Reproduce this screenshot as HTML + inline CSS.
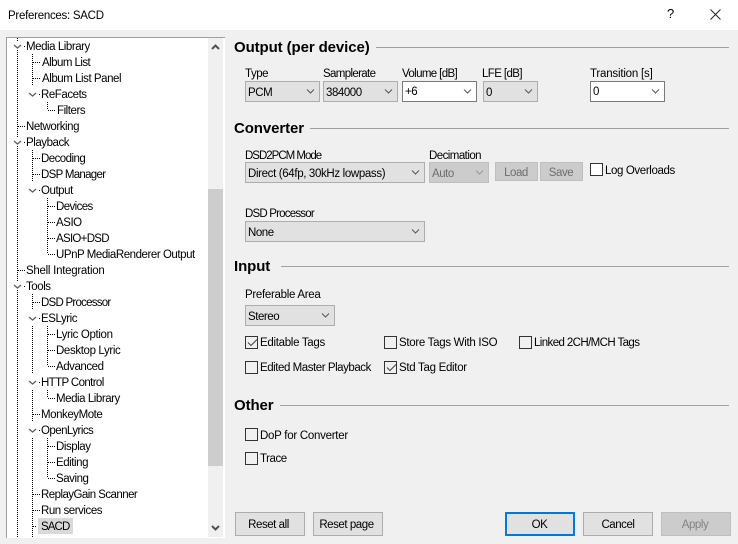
<!DOCTYPE html>
<html><head><meta charset="utf-8"><title>Preferences: SACD</title>
<style>
html,body{margin:0;padding:0}
body{width:738px;height:544px;position:relative;overflow:hidden;background:#f0f0f0;font-family:"Liberation Sans",sans-serif;font-size:11.5px;letter-spacing:-.45px;color:#000}
div,span{position:absolute;white-space:nowrap;box-sizing:border-box}
.t{line-height:16px;height:16px;margin-top:1px}
.h{font-weight:bold;font-size:15px;letter-spacing:-.1px;line-height:20px;height:20px;left:234px;margin-top:1px}
.l{height:1px;background:#a0a0a0;right:9px}
.c{height:21px;border:1px solid #adadad;background:#e1e1e1;line-height:23px;padding-left:2px}
.w{background:#fff;border-color:#7a7a7a;line-height:21px}
.d{background:#ccc;border-color:#bfbfbf;color:#6d6d6d}
.b{height:24px;width:70px;top:512px;border:1px solid #adadad;background:#e1e1e1;text-align:center;line-height:24px}
.x{width:13px;height:13px;border:1px solid #333;background:#fff}
.e{background:#f0f0f0}
</style></head><body>
<div style="left:0;top:0;width:738px;height:30px;background:#fff"></div>
<div class="t" style="left:8px;top:7px;letter-spacing:-.27px">Preferences: SACD</div>
<div style="left:6px;top:37px;width:219px;height:501px;background:#fff;border-left:1px solid #a0a0a0;border-top:1px solid #a0a0a0"></div>
<div style="left:208px;top:38px;width:15px;height:499px;background:#f0f0f0"></div>
<div style="left:208px;top:189px;width:15px;height:277px;background:#cdcdcd"></div>
<div style="left:38px;top:518px;width:35px;height:16px;background:#d9d9d9"></div>

<svg width="738" height="544" style="position:absolute;left:0;top:0">
<g fill="none" stroke="#000" stroke-dasharray="1 1" shape-rendering="crispEdges">
<path d="M17.5 38V42M17.5 50V138M17.5 146V282M17.5 290V537"/>
<path d="M32.5 54V86M32.5 150V182M32.5 294V310M32.5 326V374M32.5 390V422M32.5 438V537"/>
<path d="M47.5 102V110M47.5 198V254M47.5 326V366M47.5 390V398M47.5 438V478"/>
<path d="M18 126.500H25M33 62.500H41M33 78.500H41M48 110.500H56M33 158.500H40M33 174.500H40M48 206.500H55M48 222.500H55M48 238.500H55M48 254.500H55M18 270.500H25M33 302.500H40M48 334.500H55M48 350.500H55M48 366.500H55M48 398.500H55M33 414.500H40M48 446.500H55M48 462.500H55M48 478.500H55M33 494.500H40M33 510.500H40M33 526.500H37"/>
<path d="M24 46.500H25M39 94.500H40M24 142.500H25M39 190.500H40M24 286.500H25M39 318.500H40M39 382.500H40M39 430.500H40"/>
</g>
<g fill="none" stroke="#606060" stroke-width="1.300">
<path d="M14 45l3.500 3 3.500-3M29 93l3.500 3 3.500-3M14 141l3.500 3 3.500-3M29 189l3.500 3 3.500-3M14 285l3.500 3 3.500-3M29 317l3.500 3 3.500-3M29 381l3.500 3 3.500-3M29 429l3.500 3 3.500-3"/>
</g>
<g fill="none" stroke="#505050" stroke-width="2">
<path d="M212 49l3.500-3.500 3.500 3.500M212 526l3.500 3.500 3.500-3.500"/>
</g>
</svg>

<span class="t" style="left:26px;top:38px">Media Library</span>
<span class="t" style="left:42px;top:54px;letter-spacing:-.55px">Album List</span>
<span class="t" style="left:42px;top:70px">Album List Panel</span>
<span class="t" style="left:41px;top:86px">ReFacets</span>
<span class="t" style="left:57px;top:102px">Filters</span>
<span class="t" style="left:26px;top:118px">Networking</span>
<span class="t" style="left:26px;top:134px">Playback</span>
<span class="t" style="left:41px;top:150px;letter-spacing:-.55px">Decoding</span>
<span class="t" style="left:41px;top:166px;letter-spacing:-.7px">DSP Manager</span>
<span class="t" style="left:41px;top:182px">Output</span>
<span class="t" style="left:56px;top:198px;letter-spacing:-.6px">Devices</span>
<span class="t" style="left:56px;top:214px">ASIO</span>
<span class="t" style="left:56px;top:230px;letter-spacing:-.7px">ASIO+DSD</span>
<span class="t" style="left:56px;top:246px">UPnP MediaRenderer Output</span>
<span class="t" style="left:26px;top:262px;letter-spacing:-.27px">Shell Integration</span>
<span class="t" style="left:26px;top:278px">Tools</span>
<span class="t" style="left:41px;top:294px;letter-spacing:-.75px">DSD Processor</span>
<span class="t" style="left:41px;top:310px">ESLyric</span>
<span class="t" style="left:56px;top:326px;letter-spacing:-.36px">Lyric Option</span>
<span class="t" style="left:56px;top:342px;letter-spacing:-.37px">Desktop Lyric</span>
<span class="t" style="left:56px;top:358px">Advanced</span>
<span class="t" style="left:41px;top:374px;letter-spacing:-.62px">HTTP Control</span>
<span class="t" style="left:56px;top:390px">Media Library</span>
<span class="t" style="left:41px;top:406px">MonkeyMote</span>
<span class="t" style="left:41px;top:422px;letter-spacing:-.55px">OpenLyrics</span>
<span class="t" style="left:56px;top:438px">Display</span>
<span class="t" style="left:56px;top:454px">Editing</span>
<span class="t" style="left:56px;top:470px">Saving</span>
<span class="t" style="left:41px;top:486px;letter-spacing:-.55px">ReplayGain Scanner</span>
<span class="t" style="left:41px;top:502px">Run services</span>
<span class="t" style="left:41px;top:518px;letter-spacing:-.9px">SACD</span>

<span class="h" style="top:37px">Output (per device)</span><div class="l" style="left:376px;top:47px"></div>
<span class="h" style="top:118px">Converter</span><div class="l" style="left:310px;top:128px"></div>
<span class="h" style="top:256px">Input</span><div class="l" style="left:281px;top:266px"></div>
<span class="h" style="top:395px">Other</span><div class="l" style="left:280px;top:405px"></div>

<span class="t" style="left:245px;top:65px">Type</span>
<span class="t" style="left:323px;top:65px;letter-spacing:-.65px">Samplerate</span>
<span class="t" style="left:402px;top:65px;letter-spacing:-.63px">Volume [dB]</span>
<span class="t" style="left:482px;top:65px;letter-spacing:-.6px">LFE [dB]</span>
<span class="t" style="left:590px;top:65px;letter-spacing:-.2px">Transition [s]</span>
<div class="c" style="left:245px;top:81px;width:75px">PCM</div>
<div class="c" style="left:323px;top:81px;width:75px">384000</div>
<div class="c w" style="left:402px;top:81px;width:75px">+6</div>
<div class="c" style="left:483px;top:81px;width:55px">0</div>
<div class="c w" style="left:590px;top:81px;width:75px">0</div>

<span class="t" style="left:245px;top:147px;letter-spacing:-1px">DSD2PCM Mode</span>
<span class="t" style="left:429px;top:147px;letter-spacing:-.55px">Decimation</span>
<div class="c" style="left:245px;top:162px;width:180px;letter-spacing:-.35px">Direct (64fp, 30kHz lowpass)</div>
<div class="c d" style="left:429px;top:162px;width:60px">Auto</div>
<div class="c d" style="left:495px;top:162px;width:43px;height:19px;line-height:21px;text-align:center;padding:0 1px 0 0">Load</div>
<div class="c d" style="left:540px;top:162px;width:43px;height:19px;line-height:21px;text-align:center;padding:0 1px 0 0">Save</div>
<div class="x" style="left:590px;top:163px"></div>
<span class="t" style="left:605px;top:162px;letter-spacing:-.38px">Log Overloads</span>

<span class="t" style="left:245px;top:205px;letter-spacing:-.8px">DSD Processor</span>
<div class="c" style="left:245px;top:221px;width:180px">None</div>

<span class="t" style="left:245px;top:286px;letter-spacing:-.3px">Preferable Area</span>
<div class="c" style="left:245px;top:305px;width:90px">Stereo</div>

<div class="x e" style="left:245px;top:336px"></div><span class="t" style="left:260px;top:334px;letter-spacing:-.3px">Editable Tags</span>
<div class="x e" style="left:384px;top:336px"></div><span class="t" style="left:399px;top:334px;letter-spacing:-.3px">Store Tags With ISO</span>
<div class="x e" style="left:519px;top:336px"></div><span class="t" style="left:534px;top:334px;letter-spacing:-.6px">Linked 2CH/MCH Tags</span>
<div class="x e" style="left:245px;top:361px"></div><span class="t" style="left:260px;top:359px">Edited Master Playback</span>
<div class="x e" style="left:384px;top:361px"></div><span class="t" style="left:399px;top:359px;letter-spacing:-.3px">Std Tag Editor</span>
<div class="x e" style="left:245px;top:428px"></div><span class="t" style="left:260px;top:427px;letter-spacing:-.27px">DoP for Converter</span>
<div class="x e" style="left:245px;top:452px"></div><span class="t" style="left:260px;top:450px">Trace</span>

<div class="b" style="left:235px;padding-right:3px">Reset all</div>
<div class="b" style="left:313px;padding-right:3px">Reset page</div>
<div class="b" style="left:505px;border:2px solid #0078d7;line-height:22px;padding-right:1px">OK</div>
<div class="b" style="left:583px">Cancel</div>
<div class="b" style="left:661px;background:#ccc;border-color:#bfbfbf;color:#838383;padding-right:2px">Apply</div>

<svg width="738" height="544" style="position:absolute;left:0;top:0">
<g fill="none" stroke="#555" stroke-width="1">
<path d="M307 89.500l3.500 3.500 3.500-3.500M385 89.500l3.500 3.500 3.500-3.500M464 89.500l3.500 3.500 3.500-3.500M525 89.500l3.500 3.500 3.500-3.500M652 89.500l3.500 3.500 3.500-3.500M412 170.500l3.500 3.500 3.500-3.500M412 229.500l3.500 3.500 3.500-3.500M322 313.500l3.500 3.500 3.500-3.500"/>
<path d="M476 170.500l3.500 3.500 3.500-3.500" stroke="#999"/>
<path d="M248 342.500l3 3 6-6M387 367.500l3 3 6-6" stroke="#444"/>
<path d="M710.500 9.500l10 10M720.500 9.500l-10 10" stroke="#222"/>
</g>
</svg>
<span style="left:667px;top:6px;font-size:13px;line-height:16px">?</span>
</body></html>
